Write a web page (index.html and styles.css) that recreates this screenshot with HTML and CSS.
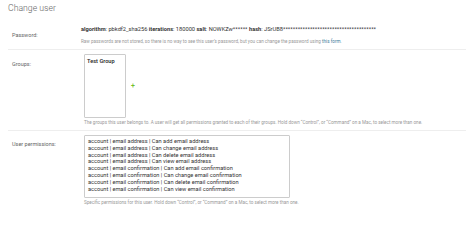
FILE: index.html
```html
<!DOCTYPE html>
<html>
<head>
<meta charset="utf-8">
<link rel="stylesheet" href="styles.css">
</head>
<body>
<div class="content">
  <h1 class="title">Change user</h1>
  <div class="row row-password">
    <div class="label">Password:</div>
    <div class="field">
      <div class="hashinfo"><strong>algorithm</strong>: pbkdf2_sha256 <strong>iterations</strong>: 180000 <strong>salt</strong>: NOWKZw****** <strong>hash</strong>: JSrUB8**************************************</div>
      <div class="help help-pw">Raw passwords are not stored, so there is no way to see this user’s password, but you can change the password using <a class="link" href="#">this form</a>.</div>
    </div>
  </div>
  <div class="row row-groups">
    <div class="label label-groups">Groups:</div>
    <div class="field">
      <div class="select-wrap">
        <div class="select select-groups">
          <div class="option option-strong">Test Group</div>
        </div>
        <span class="add">+</span>
      </div>
      <div class="help help-groups">The groups this user belongs to. A user will get all permissions granted to each of their groups. Hold down “Control”, or “Command” on a Mac, to select more than one.</div>
    </div>
  </div>
  <div class="row row-perms">
    <div class="label label-perms">User permissions:</div>
    <div class="field">
      <div class="select select-perms">
        <div class="option">account | email address | Can add email address</div>
        <div class="option">account | email address | Can change email address</div>
        <div class="option">account | email address | Can delete email address</div>
        <div class="option">account | email address | Can view email address</div>
        <div class="option">account | email confirmation | Can add email confirmation</div>
        <div class="option">account | email confirmation | Can change email confirmation</div>
        <div class="option">account | email confirmation | Can delete email confirmation</div>
        <div class="option">account | email confirmation | Can view email confirmation</div>
      </div>
      <div class="help help-perms">Specific permissions for this user. Hold down “Control”, or “Command” on a Mac, to select more than one.</div>
    </div>
  </div>
</div>
</body>
</html>
```

FILE: styles.css
```css
* { box-sizing: border-box; }
html, body { margin: 0; padding: 0; background: #fff; }
body { font-family: Roboto, "Liberation Sans", sans-serif; color: #333; overflow: hidden; }
.content { padding: 0 8px; width: 474px; }
.title {
  margin: 0;
  padding: 3px 0 0 0;
  font-size: 8.7px;
  line-height: 11px;
  font-weight: 300;
  color: #666;
  height: 22px;
}
.row {
  display: flex;
  border-bottom: 1px solid #eee;
  padding-left: 4px;
}
.label {
  width: 69px;
  flex: none;
  font-size: 5.5px;
  color: #666;
  line-height: 7px;
  white-space: nowrap;
}
.field { flex: 1; min-width: 0; }
.row-password { height: 28px; padding-top: 4px; }
.row-password .label { padding-top: 6px; }
.hashinfo { font-size: 5.7px; line-height: 6px; white-space: nowrap; color: #333; }
.hashinfo strong { font-weight: 700; }
.help { font-size: 4.6px; line-height: 6px; color: #999; white-space: nowrap; }
.help-pw { margin-top: 7px; }
.link { color: #447e9b; text-decoration: none; }
.row-groups { height: 81px; padding-top: 4px; }
.label-groups { padding-top: 7px; }
.select-wrap { display: flex; align-items: center; padding-left: 3px; }
.select {
  border: 1px solid #ccc;
  border-radius: 1px;
  background: #fff;
  padding: 3px 2px;
}
.select-groups { width: 42px; height: 64px; }
.option { font-size: 5.65px; line-height: 6.8px; color: #333; white-space: nowrap; }
.option-strong { font-weight: 500; color: #222; }
.add { color: #70bf2b; font-size: 7px; line-height: 7px; margin-left: 5px; font-weight: 500; }
.help-groups { margin-top: 2px; padding-left: 3px; }
.row-perms { padding-top: 4px; border-bottom: none; }
.label-perms { padding-top: 6px; }
.select-perms { margin-left: 3px; width: 206px; height: 63px; padding: 2px 3px; }
.help-perms { margin-top: 2px; padding-left: 3px; }
```
